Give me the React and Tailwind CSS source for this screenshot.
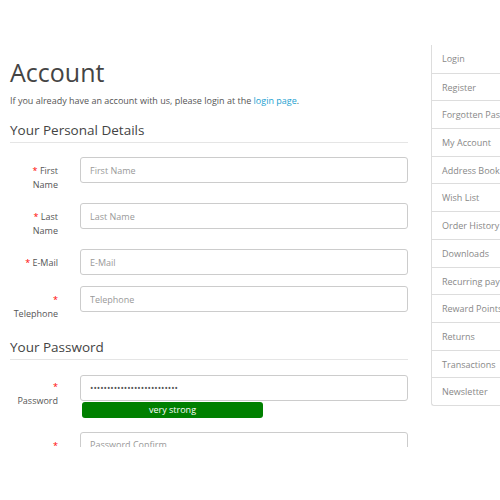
const fields = [
  { label: ["First", "Name"], placeholder: "First Name" },
  { label: ["Last", "Name"], placeholder: "Last Name" },
  { label: ["E-Mail"], placeholder: "E-Mail" },
  { label: ["", "Telephone"], placeholder: "Telephone" },
];

const links = [
  "Login",
  "Register",
  "Forgotten Password",
  "My Account",
  "Address Book",
  "Wish List",
  "Order History",
  "Downloads",
  "Recurring payments",
  "Reward Points",
  "Returns",
  "Transactions",
  "Newsletter",
];

function Label({ lines }) {
  return (
    <div className="w-[48px] shrink-0 pt-[7px] text-right text-[9px] leading-[14px] text-[#555]">
      {lines.length === 1 ? (
        <div>
          <span className="text-[#f00]">*</span> {lines[0]}
        </div>
      ) : (
        <>
          <div>
            <span className="text-[#f00]">*</span>
            {lines[0] ? " " + lines[0] : ""}
          </div>
          <div>{lines[1]}</div>
        </>
      )}
    </div>
  );
}

function Legend({ children }) {
  return (
    <div className="border-b border-[#e5e5e5] pb-[2px] text-[13.5px] leading-[20px] text-[#444]">
      {children}
    </div>
  );
}

function Input({ placeholder, type = "text", value }) {
  return (
    <input
      type={type}
      placeholder={placeholder}
      defaultValue={value}
      className="h-[26px] w-full rounded-[3px] border border-[#ccc] bg-white px-[9px] text-[9px] text-[#555] placeholder:text-[#999] outline-none"
    />
  );
}

export default function App() {
  return (
    <div
      className="h-[447px] w-[500px] overflow-hidden bg-white"
      style={{ fontFamily: '"Open Sans", "Noto Sans", sans-serif' }}
    >
      <div className="flex pl-[10px]">
        <div className="w-[398px] shrink-0 pt-[59px]">
          <h1 className="text-[25px] leading-[26px] text-[#444]">Account</h1>
          <p className="mt-[9px] text-[9px] leading-[14px] text-[#555]">
            If you already have an account with us, please login at the{" "}
            <a className="text-[#23a1d1]">login page</a>.
          </p>

          <div className="mt-[12px]">
            <Legend>Your Personal Details</Legend>
          </div>
          <div className="mt-[14px] flex flex-col gap-[11px]">
            {fields.map((f) => (
              <div key={f.placeholder} className="flex gap-[22px]">
                <Label lines={f.label} />
                <Input placeholder={f.placeholder} />
              </div>
            ))}
          </div>

          <div className="mt-[16px]">
            <Legend>Your Password</Legend>
          </div>
          <div className="mt-[13px] flex flex-col gap-[11px]">
            <div className="flex gap-[22px]">
              <Label lines={["", "Password"]} />
              <div className="flex-1">
                <Input type="password" value="abcdefghijklmnopqrstuvwxyz" />
                <div className="ml-[2px] mt-[1px] mb-[3px] h-[16px] w-[181px] rounded-[3px] bg-[#008000] text-center text-[9px] leading-[16px] text-white">
                  very strong
                </div>
              </div>
            </div>
            <div className="flex gap-[22px]">
              <Label lines={["", "Confirm"]} />
              <Input type="password" placeholder="Password Confirm" />
            </div>
          </div>
        </div>

        <div className="ml-[23px] mt-[45px] w-[150px] shrink-0">
          <div className="rounded-bl-[3px] border-b border-l border-[#ddd]">
            {links.map((l, i) => (
              <div
                key={l}
                className={`h-[27.7px] whitespace-nowrap pl-[10px] text-[9px] leading-[27px] text-[#888] ${
                  i > 0 ? "border-t border-[#ddd]" : ""
                }`}
              >
                {l}
              </div>
            ))}
          </div>
        </div>
      </div>
    </div>
  );
}
